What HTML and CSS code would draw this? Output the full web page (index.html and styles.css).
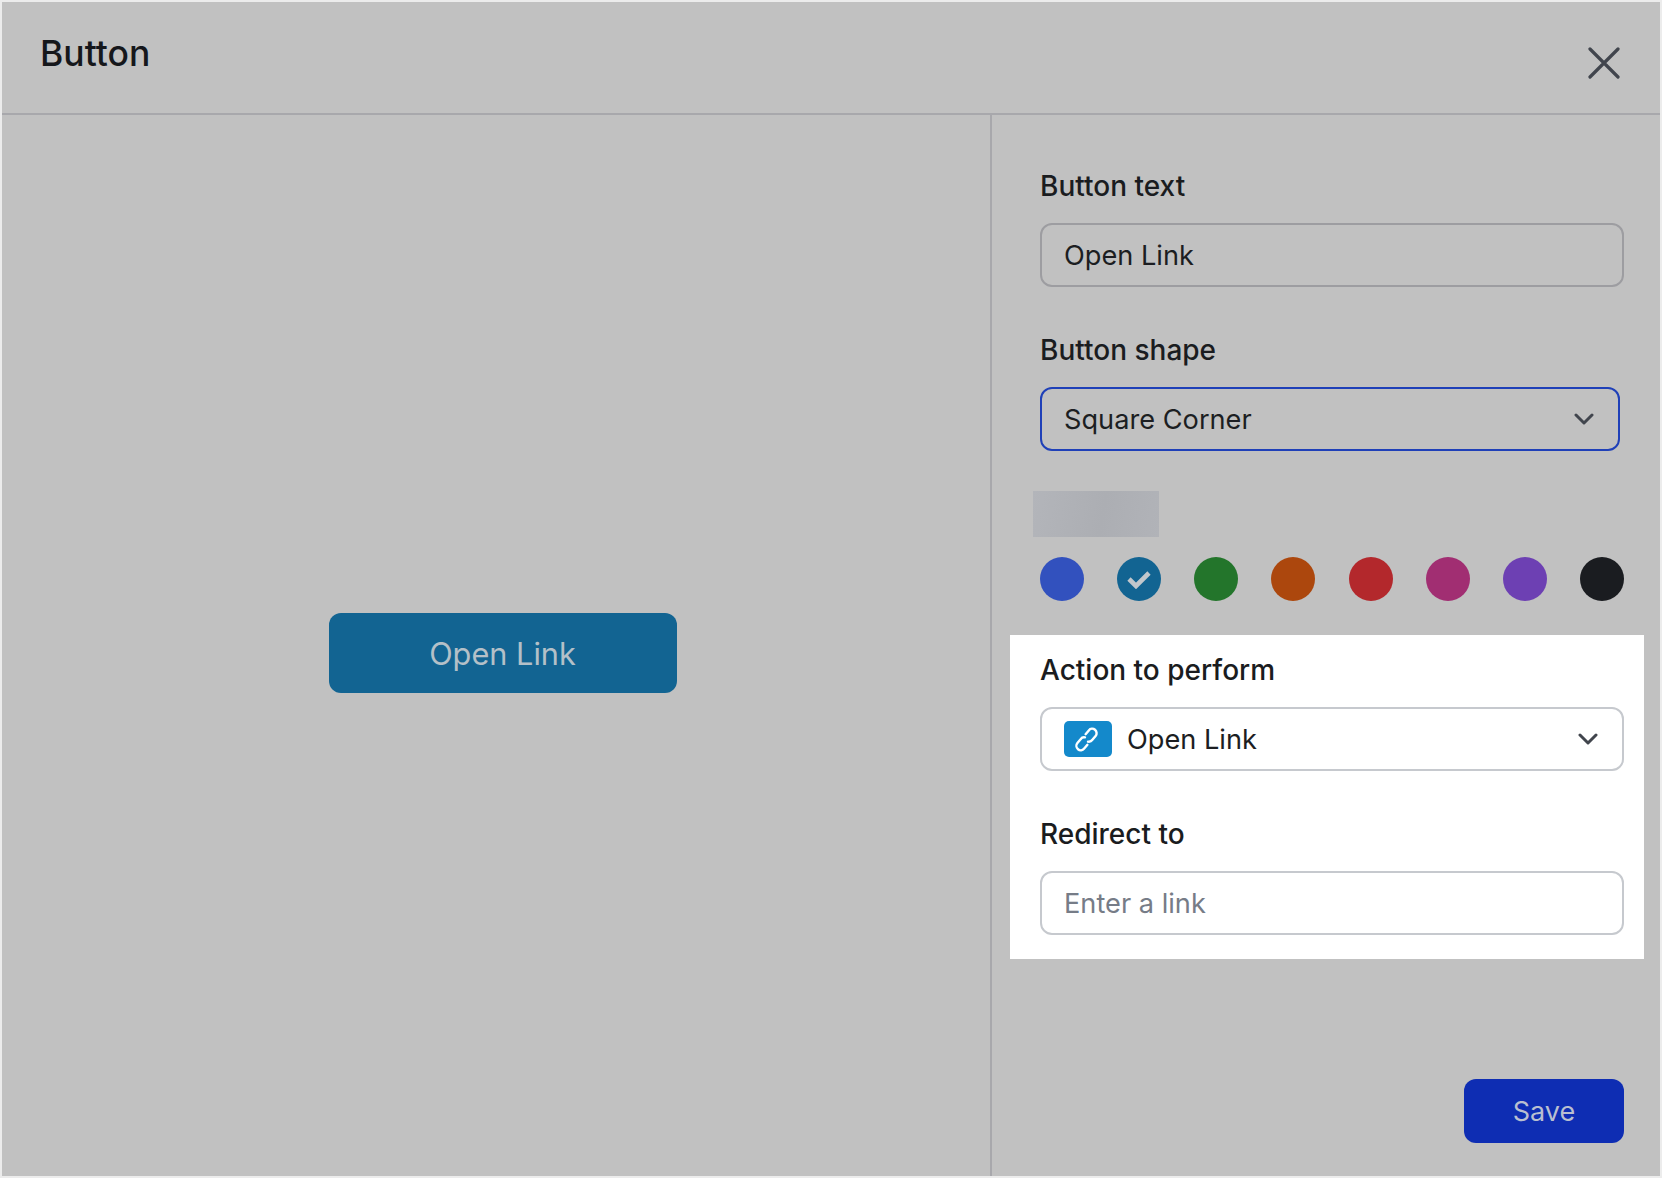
FILE: index.html
```html
<!DOCTYPE html>
<html lang="en">
<head>
<meta charset="utf-8">
<title>Button</title>
<link rel="stylesheet" href="styles.css">
</head>
<body>
<div class="dialog">
  <header class="head">
    <h1 class="title">Button</h1>
    <svg class="close" width="32" height="32" viewBox="0 0 32 32"><path d="M2 2 30 30M30 2 2 30" fill="none" stroke="#41454d" stroke-width="3.2" stroke-linecap="round"/></svg>
  </header>
  <div class="main">
    <section class="preview">
      <div class="preview-btn">Open Link</div>
    </section>
    <aside class="panel">
      <label class="label">Button text</label>
      <div class="field field-dim">Open Link</div>
      <label class="label label-next">Button shape</label>
      <div class="field field-focus">
        <span class="grow">Square Corner</span>
        <svg class="chev" width="20" height="12" viewBox="0 0 20 12"><path d="M2 2 10 10 18 2" fill="none" stroke="#41454d" stroke-width="3" stroke-linecap="round" stroke-linejoin="round"/></svg>
      </div>
      <div class="blur"></div>
      <div class="dots">
        <span class="dot c1"></span>
        <span class="dot c2"><svg width="26" height="20" viewBox="0 0 26 20"><path d="M3 10 10 17 23 4" fill="none" stroke="#c1c7cc" stroke-width="4.6" stroke-linejoin="miter"/></svg></span>
        <span class="dot c3"></span>
        <span class="dot c4"></span>
        <span class="dot c5"></span>
        <span class="dot c6"></span>
        <span class="dot c7"></span>
        <span class="dot c8"></span>
      </div>
      <div class="highlight">
        <label class="label">Action to perform</label>
        <div class="field field-light">
          <span class="link-icon">
            <svg width="28" height="28" viewBox="0 0 28 28" fill="none" stroke="#fff" stroke-width="2.4" stroke-linecap="round"><path d="M11.6 9.2 14.8 5.4A4.4 4.4 0 0 1 21.6 11L18.4 14.8A4.4 4.4 0 0 1 14 16.6"/><path d="M13.4 19.8 10.2 23.6A4.4 4.4 0 0 1 3.4 18L6.6 14.2A4.4 4.4 0 0 1 11 12.4"/></svg>
          </span>
          <span class="grow">Open Link</span>
          <svg class="chev chev-wide" width="20" height="12" viewBox="0 0 20 12"><path d="M2 2 10 10 18 2" fill="none" stroke="#41454d" stroke-width="3" stroke-linecap="round" stroke-linejoin="round"/></svg>
        </div>
        <label class="label label-next">Redirect to</label>
        <div class="field field-light placeholder">Enter a link</div>
      </div>
      <div class="actions"><div class="save">Save</div></div>
    </aside>
  </div>
</div>
</body>
</html>
```
FILE: styles.css
```css
* { box-sizing: border-box; }
html, body { margin: 0; height: 100%; }
body { background: #ececec; font-family: Inter, "Liberation Sans", sans-serif; color: #1a1c20; }
.dialog {
  width: 1662px; height: 1178px; padding: 2px;
  display: flex; flex-direction: column;
  background: #ececec;
}
.head {
  height: 113px; flex: none;
  background: #c1c1c1; border-bottom: 2px solid #a8a8ac;
  position: relative;
}
.title { margin: 0; padding: 30px 0 0 38px; font-size: 35.5px; line-height: 44px; font-weight: 500; color: #15171b; }
.close { position: absolute; left: 1586px; top: 45px; }
.main { flex: 1; display: flex; background: #c1c1c1; min-height: 0; }
.preview {
  width: 990px; border-right: 2px solid #a8a8ac;
  display: flex; align-items: center; justify-content: center;
  padding-left: 13px; padding-top: 15px;
}
.preview-btn {
  width: 348px; height: 80px; border-radius: 12px;
  background: #126492; color: #b4c0c8;
  font-size: 30.7px; line-height: 82px; text-align: center;
}
.panel { flex: 1; padding: 51px 36px 0 48px; display: flex; flex-direction: column; }
.label { display: block; height: 38px; line-height: 40px; font-size: 28px; font-weight: 500; color: #1a1c20; }
.label-next { margin-top: 43px; }
.field {
  height: 64px; margin-top: 19px; padding: 0 22px;
  border-radius: 12px; border: 2px solid #9d9da1;
  display: flex; align-items: center;
  font-size: 27.2px; color: #1c1e22;
}
.field-focus { border-color: #1f40b8; margin-right: 4px; }
.field-light { border-color: #c6c9ce; background: #fff; }
.placeholder { color: #767c87; }
.grow { flex: 1; }
.chev { margin-right: 2px; }
.link-icon {
  width: 48px; height: 36px; margin-right: 15px; border-radius: 5px;
  background: #1489cb; display: flex; align-items: center; justify-content: center;
}
.chev-wide { margin-right: 2px; }
.blur {
  width: 126px; height: 46px; margin: 40px 0 0 -7px;
  background: linear-gradient(100deg, #b3b5ba, #acaeb3 55%, #b1b3b8);
}
.dots { display: flex; justify-content: space-between; margin-top: 20px; }
.dot { width: 44px; height: 44px; border-radius: 50%; display: flex; align-items: center; justify-content: center; }
.c1 { background: #3251be; }
.c2 { background: #126492; }
.c3 { background: #23752b; }
.c4 { background: #ac470d; }
.c5 { background: #b3282c; }
.c6 { background: #a12e72; }
.c7 { background: #6d40b3; }
.c8 { background: #1a1c20; }
.highlight {
  margin: 34px -20px 0 -30px; padding: 15px 20px 23px 30px;
  background: #fff; height: 324px;
}
.actions { flex: 1; display: flex; justify-content: flex-end; align-items: flex-start; padding-top: 120px; }
.save {
  width: 160px; height: 64px; border-radius: 12px;
  background: #0e2db3; color: #b9bfd0;
  font-size: 27px; line-height: 66px; text-align: center;
}
```
